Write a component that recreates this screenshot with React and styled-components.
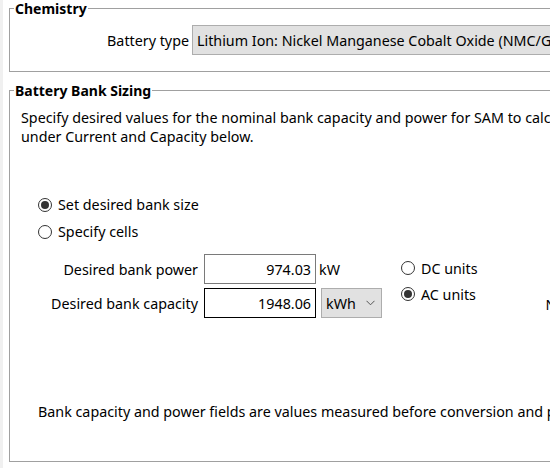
import React from "react";
import styled, { createGlobalStyle } from "styled-components";

const Global = createGlobalStyle`
  html, body { margin: 0; padding: 0; background: #ffffff; overflow: hidden; }
  body { width: 550px; height: 468px; font-family: "Noto Sans", "Open Sans", sans-serif; font-size: 14.3px; color: #000; }
  #root { width: 550px; height: 468px; overflow: hidden; }
`;

const Page = styled.div`
  width: 550px;
  height: 468px;
  box-sizing: border-box;
  border-left: 3px solid #f0f0f0;
  padding-left: 6px;
  display: flex;
  flex-direction: column;
  gap: 10px;
  overflow: hidden;
`;

const Group = styled.fieldset`
  margin: 0;
  width: 800px;
  box-sizing: border-box;
  border: 1px solid #a0a0a0;
  padding: ${(p) => p.$pad};
  min-inline-size: 0;
`;

const Legend = styled.legend`
  font-weight: 700;
  font-size: 14px;
  line-height: 17px;
  padding: 0 1px;
  margin-left: ${(p) => p.$ml}px;
`;

const ChemRow = styled.div`
  display: flex;
  align-items: center;
`;

const RowLabel = styled.label`
  width: ${(p) => p.$w}px;
  text-align: right;
  padding-right: 3px;
  box-sizing: border-box;
  white-space: nowrap;
  line-height: 19px;
`;

const Combo = styled.div`
  height: 30px;
  width: ${(p) => p.$w}px;
  box-sizing: border-box;
  background: #e1e1e1;
  border: 1px solid #adadad;
  display: flex;
  align-items: center;
  justify-content: space-between;
  padding: 0 6px 0 4px;
  white-space: nowrap;
  overflow: hidden;
  margin-left: ${(p) => p.$ml || 0}px;
`;

const Chevron = () => (
  <svg width="9" height="6" viewBox="0 0 9 6">
    <path d="M0.5 0.8 L4.5 4.8 L8.5 0.8" fill="none" stroke="#555" strokeWidth="1" />
  </svg>
);

const Para = styled.p`
  margin: 0;
  line-height: 19px;
  white-space: nowrap;
  margin-left: ${(p) => p.$ml || 0}px;
  margin-top: ${(p) => p.$mt || 0}px;
`;

const RadioStack = styled.div`
  display: flex;
  flex-direction: column;
  margin-left: ${(p) => p.$ml || 0}px;
  margin-top: ${(p) => p.$mt || 0}px;
`;

const RadioRow = styled.label`
  display: flex;
  align-items: center;
  height: ${(p) => p.$h || 27}px;
  gap: 6px;
  white-space: nowrap;
`;

const RadioInput = styled.input.attrs({ type: "radio" })`
  appearance: none;
  margin: 0;
  width: 14px;
  height: 14px;
  border: 1px solid #333;
  border-radius: 50%;
  box-sizing: border-box;
  display: grid;
  place-items: center;
  background: #fff;
  &:checked::after {
    content: "";
    width: 8px;
    height: 8px;
    border-radius: 50%;
    background: #333;
  }
`;

const FieldsArea = styled.div`
  display: flex;
  align-items: flex-start;
  margin-top: 9px;
`;

const FieldGrid = styled.div`
  display: grid;
  grid-template-columns: 180px 112px auto;
  column-gap: 3px;
  row-gap: 4px;
  align-items: center;
`;

const NumBox = styled.input`
  width: 112px;
  height: 30px;
  box-sizing: border-box;
  border: 1px solid ${(p) => (p.$focus ? "#000" : "#7a7a7a")};
  text-align: right;
  padding: 0 4px;
  font: inherit;
  background: #fff;
  outline: none;
`;

const Unit = styled.span`
  width: 64px;
`;

const SideLabel = styled.span`
  margin-left: 68px;
  margin-top: 41px;
  white-space: nowrap;
  line-height: 19px;
`;

export default function App() {
  return (
    <>
      <Global />
      <Page>
        <Group $pad="8px 0 16px 0">
          <Legend $ml={4}>Chemistry</Legend>
          <ChemRow>
            <RowLabel $w={182}>Battery type</RowLabel>
            <Combo $w={600}>
              <span>Lithium Ion: Nickel Manganese Cobalt Oxide (NMC/Graphite)</span>
              <Chevron />
            </Combo>
          </ChemRow>
        </Group>
        <Group $pad="9px 0 40px 11px">
          <Legend $ml={-7}>Battery Bank Sizing</Legend>
          <Para>
            Specify desired values for the nominal bank capacity and power for SAM to calculate the number of cells, and review the results
          </Para>
          <Para>under Current and Capacity below.</Para>
          <RadioStack $ml={17} $mt={45}>
            <RadioRow>
              <RadioInput name="mode" defaultChecked />
              Set desired bank size
            </RadioRow>
            <RadioRow>
              <RadioInput name="mode" />
              Specify cells
            </RadioRow>
          </RadioStack>
          <FieldsArea>
            <FieldGrid>
              <RowLabel $w={180}>Desired bank power</RowLabel>
              <NumBox defaultValue="974.03" />
              <Unit>kW</Unit>
              <RowLabel $w={180}>Desired bank capacity</RowLabel>
              <NumBox $focus defaultValue="1948.06" />
              <Combo $w={61} $ml={2}>
                <span>kWh</span>
                <Chevron />
              </Combo>
            </FieldGrid>
            <RadioStack $ml={18} $mt={1}>
              <RadioRow $h={26}>
                <RadioInput name="units" />
                DC units
              </RadioRow>
              <RadioRow $h={26}>
                <RadioInput name="units" defaultChecked />
                AC units
              </RadioRow>
            </RadioStack>
            <SideLabel>Nominal bank voltage</SideLabel>
          </FieldsArea>
          <Para $ml={17} $mt={84}>
            Bank capacity and power fields are values measured before conversion and power electronics losses.
          </Para>
        </Group>
      </Page>
    </>
  );
}
